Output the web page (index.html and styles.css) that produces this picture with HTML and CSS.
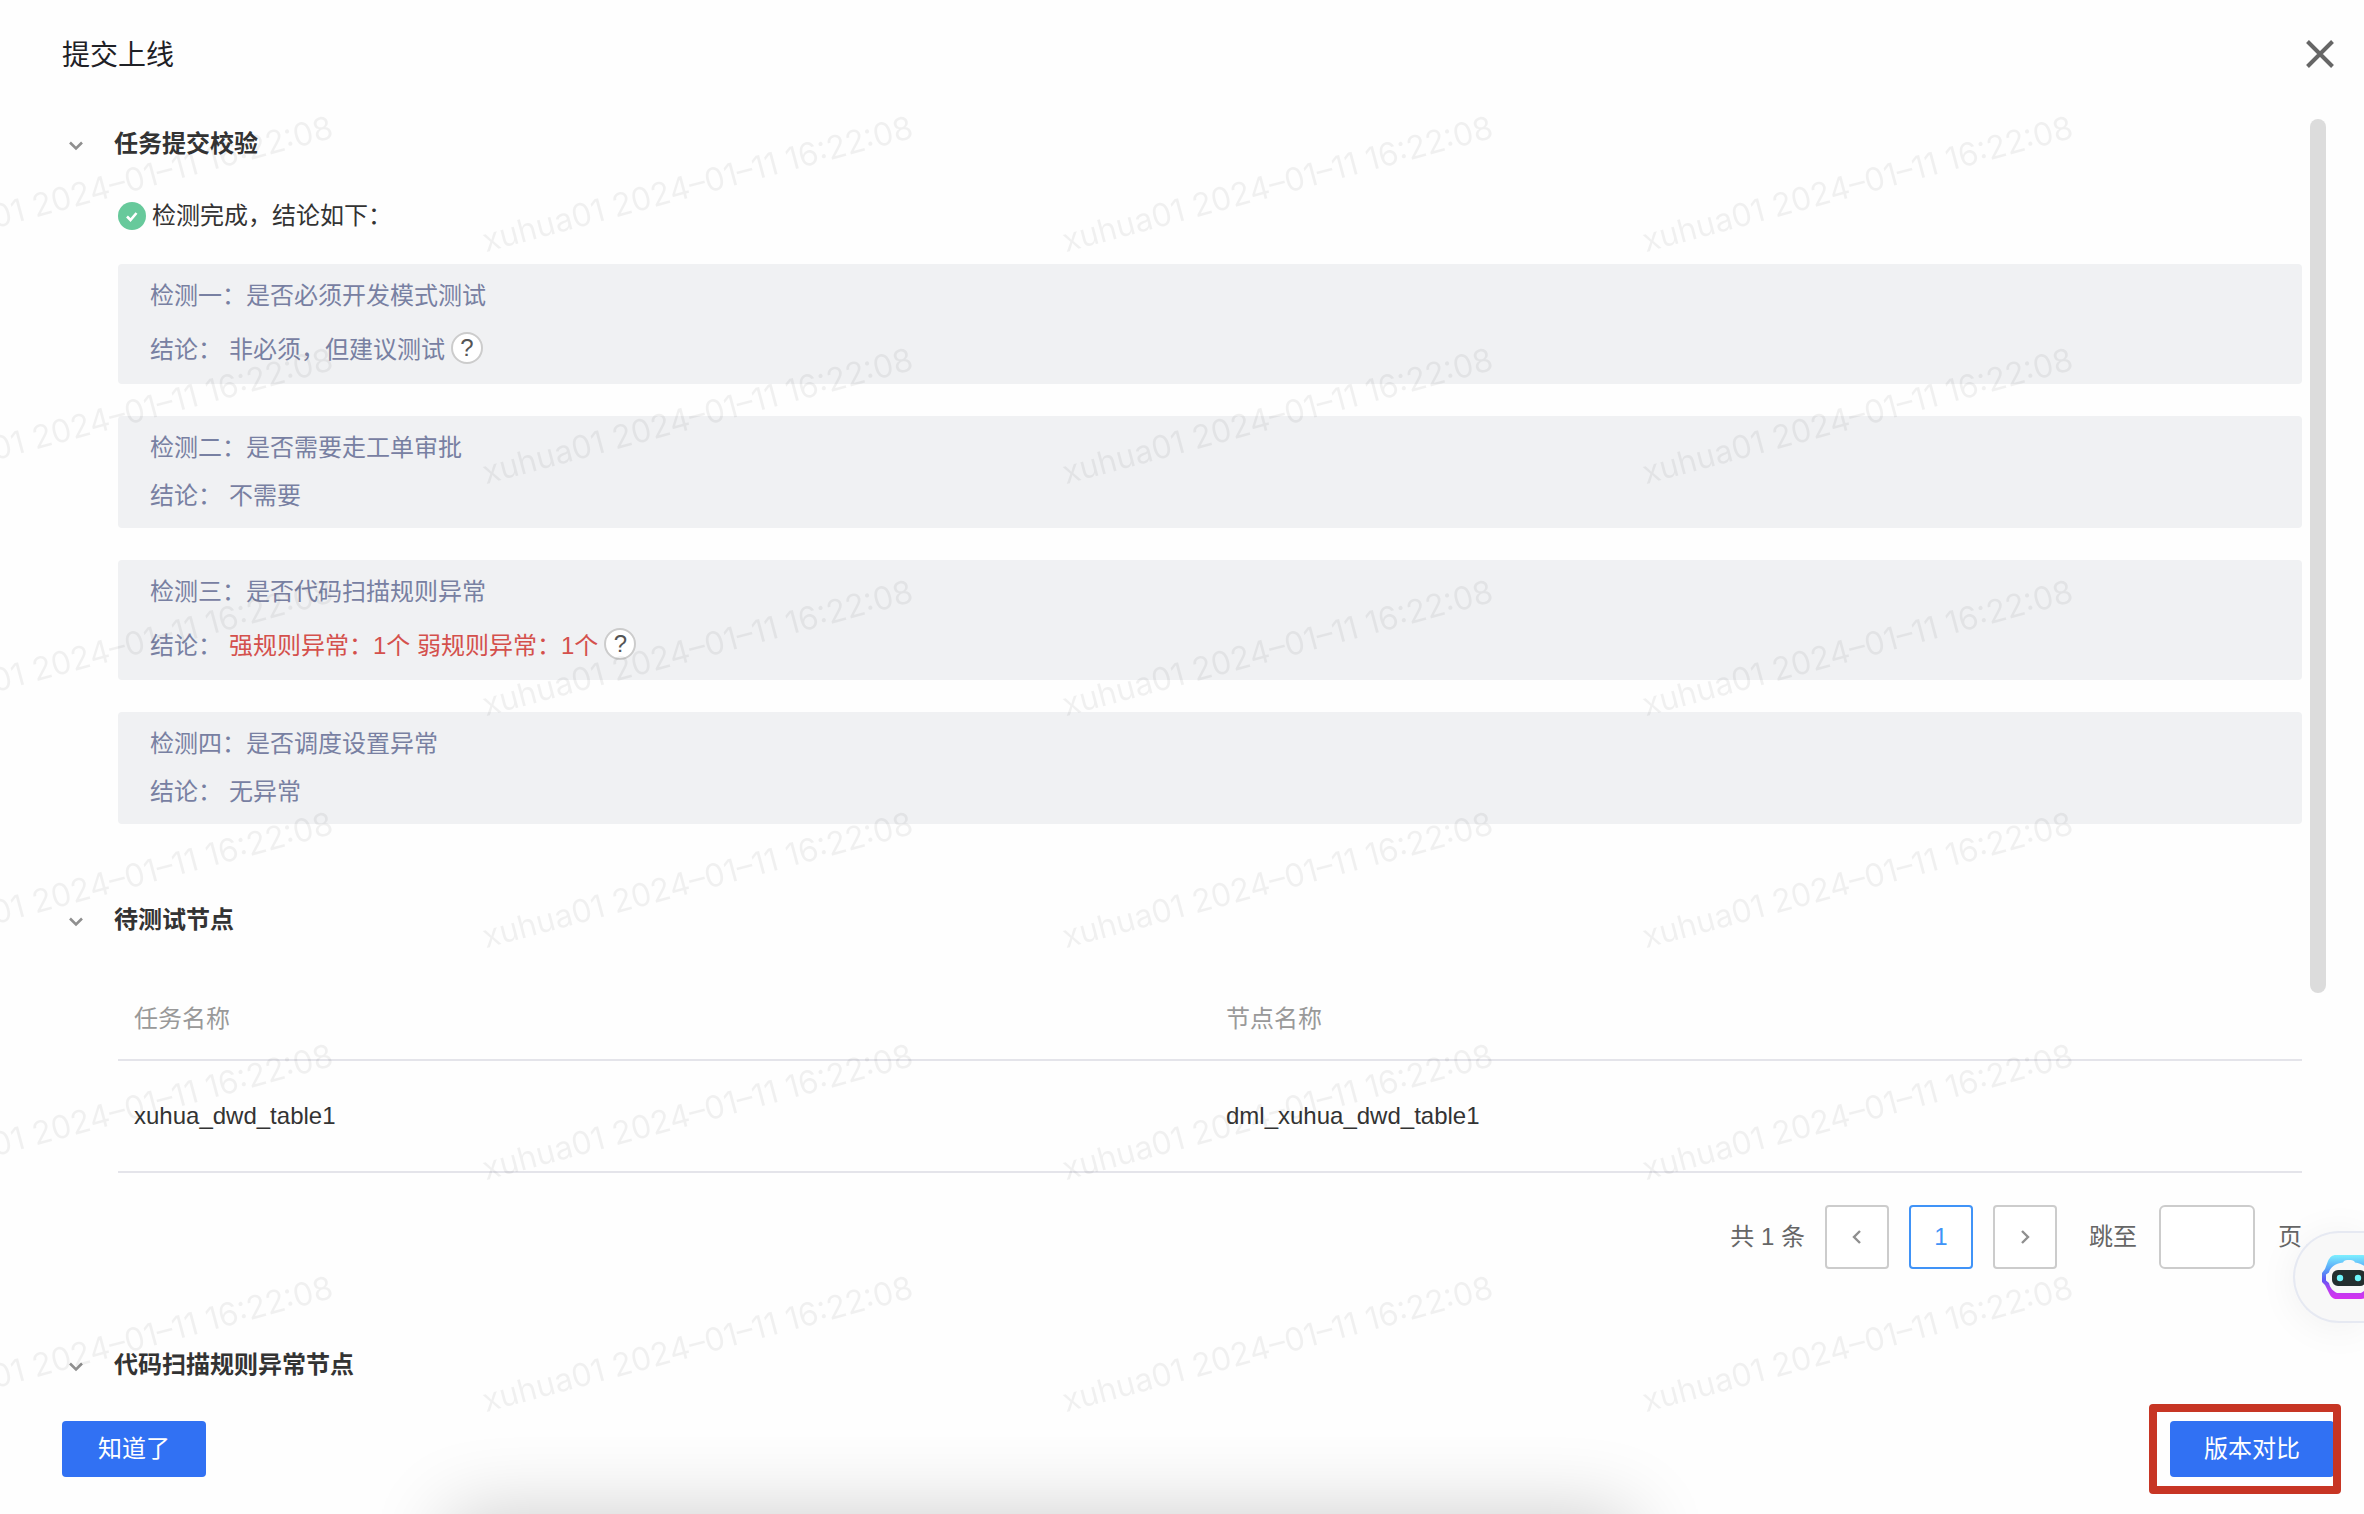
FILE: index.html
```html
<!DOCTYPE html>
<html lang="zh-CN">
<head>
<meta charset="utf-8">
<meta name="viewport" content="width=device-width, initial-scale=1">
<title>提交上线</title>
<link rel="stylesheet" href="styles.css">
</head>
<body>
<div class="dialog" role="dialog" aria-labelledby="dialog-title">
  <header class="dialog-header">
    <h1 class="dialog-title" id="dialog-title">提交上线</h1>
    <button class="close" type="button" aria-label="关闭">
      <svg width="28" height="28" viewBox="0 0 28 28" fill="none" stroke="#666" stroke-width="4"><path d="M1.5 1.5l25 25M26.5 1.5l-25 25"/></svg>
    </button>
  </header>

  <main class="dialog-body">
    <details class="section" open>
      <summary class="section-head">
        <svg class="chevron" width="14" height="10" viewBox="0 0 14 10" fill="none" stroke="#8f8f8f" stroke-width="2.6"><path d="M1 1.5l6 6 6-6"/></svg>
        <span>任务提交校验</span>
      </summary>
      <p class="status">
        <svg width="28" height="28" viewBox="0 0 28 28"><circle cx="14" cy="14" r="14" fill="#67c99b"/><path d="M9 14.5l3.500 3.500 6-7" fill="none" stroke="#fff" stroke-width="2.6"/></svg>
        <span>检测完成，结论如下：</span>
      </p>
      <div class="checks">
        <div class="check">
          <p class="line">检测一：是否必须开发模式测试</p>
          <p class="line line-tall">结论：<span class="result">非必须，但建议测试</span><button class="help" type="button" aria-label="帮助">?</button></p>
        </div>
        <div class="check">
          <p class="line">检测二：是否需要走工单审批</p>
          <p class="line">结论：<span class="result">不需要</span></p>
        </div>
        <div class="check">
          <p class="line">检测三：是否代码扫描规则异常</p>
          <p class="line line-tall">结论：<span class="result result-error">强规则异常：1个 弱规则异常：1个</span><button class="help" type="button" aria-label="帮助">?</button></p>
        </div>
        <div class="check">
          <p class="line">检测四：是否调度设置异常</p>
          <p class="line">结论：<span class="result">无异常</span></p>
        </div>
      </div>
    </details>

    <details class="section" open>
      <summary class="section-head">
        <svg class="chevron" width="14" height="10" viewBox="0 0 14 10" fill="none" stroke="#8f8f8f" stroke-width="2.6"><path d="M1 1.5l6 6 6-6"/></svg>
        <span>待测试节点</span>
      </summary>
      <div class="table-wrap">
        <table class="nodes">
          <thead><tr><th scope="col">任务名称</th><th scope="col">节点名称</th></tr></thead>
          <tbody><tr><td>xuhua_dwd_table1</td><td>dml_xuhua_dwd_table1</td></tr></tbody>
        </table>
        <nav class="pager" aria-label="分页">
          <span class="total">共 1 条</span>
          <button class="page" type="button" aria-label="上一页"><svg width="10" height="14" viewBox="0 0 10 14" fill="none" stroke="#8f8f8f" stroke-width="2.4"><path d="M8 1L2 7l6 6"/></svg></button>
          <button class="page page-current" type="button" aria-current="page">1</button>
          <button class="page" type="button" aria-label="下一页"><svg width="10" height="14" viewBox="0 0 10 14" fill="none" stroke="#8f8f8f" stroke-width="2.4"><path d="M2 1l6 6-6 6"/></svg></button>
          <label class="jump-label" for="jump">跳至</label>
          <input class="jump" id="jump" type="text">
          <span class="jump-unit">页</span>
        </nav>
      </div>
    </details>

    <details class="section">
      <summary class="section-head">
        <svg class="chevron" width="14" height="10" viewBox="0 0 14 10" fill="none" stroke="#8f8f8f" stroke-width="2.6"><path d="M1 1.5l6 6 6-6"/></svg>
        <span>代码扫描规则异常节点</span>
      </summary>
    </details>
    <div class="scroll-thumb"></div>
  </main>

  <footer class="dialog-footer">
    <button class="primary" type="button">知道了</button>
    <div class="compare">
      <button class="primary" type="button">版本对比</button>
    </div>
  </footer>
</div>

<button class="assistant" type="button" aria-label="智能助手">
  <svg width="54" height="44" viewBox="0 0 54 44">
    <defs><linearGradient id="shell" x1="0" y1="0" x2="0" y2="1"><stop offset="0" stop-color="#7df0ff"/><stop offset=".3" stop-color="#5aa8f8"/><stop offset=".55" stop-color="#5a5af5"/><stop offset=".8" stop-color="#b83df0"/><stop offset="1" stop-color="#d633f0"/></linearGradient></defs>
    <path fill="url(#shell)" d="M14 0h26c4 0 6 2 8 6l3 8 3 4v9l-3 3-4 8c-2 4-4 6-8 6H15c-4 0-6-2-8-6l-4-8-3-3v-9l3-4 3-8c2-4 4-6 8-6z"/>
    <path fill="#f8f8f8" d="M22 6c1-1.500 9-1.500 10 0l1 1.500c8 1.500 13 5 14 10l3 2v6l-3 2c-1 4-3 8-8 10.500H15c-4-2-7-5-8-10l-3-2.500v-6l3-2c1-5 6-9 14-10z"/>
    <rect x="10" y="15" width="34" height="16" rx="6" fill="#232f2f"/>
    <circle cx="18" cy="23" r="3.200" fill="#6ff5fb"/><circle cx="36" cy="23" r="3.200" fill="#6ff5fb"/>
  </svg>
</button>

<div class="dock-shadow"></div>

<div class="watermark" aria-hidden="true">
  <span>xuhua01 2024–01–11 16:22:08</span><span>xuhua01 2024–01–11 16:22:08</span><span>xuhua01 2024–01–11 16:22:08</span><span>xuhua01 2024–01–11 16:22:08</span>
  <span>xuhua01 2024–01–11 16:22:08</span><span>xuhua01 2024–01–11 16:22:08</span><span>xuhua01 2024–01–11 16:22:08</span><span>xuhua01 2024–01–11 16:22:08</span>
  <span>xuhua01 2024–01–11 16:22:08</span><span>xuhua01 2024–01–11 16:22:08</span><span>xuhua01 2024–01–11 16:22:08</span><span>xuhua01 2024–01–11 16:22:08</span>
  <span>xuhua01 2024–01–11 16:22:08</span><span>xuhua01 2024–01–11 16:22:08</span><span>xuhua01 2024–01–11 16:22:08</span><span>xuhua01 2024–01–11 16:22:08</span>
  <span>xuhua01 2024–01–11 16:22:08</span><span>xuhua01 2024–01–11 16:22:08</span><span>xuhua01 2024–01–11 16:22:08</span><span>xuhua01 2024–01–11 16:22:08</span>
  <span>xuhua01 2024–01–11 16:22:08</span><span>xuhua01 2024–01–11 16:22:08</span><span>xuhua01 2024–01–11 16:22:08</span><span>xuhua01 2024–01–11 16:22:08</span>
</div>
</body>
</html>
```
FILE: styles.css
```css
* { box-sizing: border-box; }

body {
  margin: 0;
  background: #fefefe;
  color: #333;
  font: 24px/36px "Liberation Sans", "Noto Sans CJK SC", sans-serif;
}

h1, p { margin: 0; }

button {
  padding: 0;
  border: 0;
  background: none;
  font: inherit;
  cursor: pointer;
}

svg { display: block; flex: none; }

.dialog {
  display: flex;
  flex-direction: column;
  min-height: 100vh;
}

/* Header */
.dialog-header {
  display: flex;
  align-items: flex-start;
  justify-content: space-between;
  padding: 34px 30px 0 62px;
}

.dialog-title {
  color: #1f2126;
  font-size: 28px;
  line-height: 44px;
  font-weight: 400;
}

.close { margin-top: 6px; }

/* Body */
.dialog-body {
  position: relative;
  flex: 1;
  margin-top: 40px;
  padding: 8px 62px 0 69px;
}

.section-head {
  display: flex;
  align-items: center;
  gap: 31px;
  height: 36px;
  list-style: none;
  font-weight: 700;
  cursor: pointer;
}

.section-head::-webkit-details-marker { display: none; }

.section + .section { margin-top: 78px; }

.chevron { margin-top: 4px; }

.status {
  display: flex;
  align-items: center;
  gap: 6px;
  margin: 36px 0 30px 49px;
}

.checks {
  display: grid;
  gap: 32px;
  margin-left: 49px;
}

.check {
  padding: 8px 32px;
  border-radius: 4px;
  background: #f0f1f3;
  color: #7880a2;
}

.line {
  display: flex;
  align-items: center;
  height: 48px;
}

.line-tall {
  height: 56px;
  padding-top: 3px;
}

.result { margin: 0 6px 0 7px; }

.result-error { color: #d4504c; }

.help {
  width: 32px;
  height: 32px;
  margin-bottom: 3px;
  border: 2px solid #ccc;
  border-radius: 50%;
  background: #fff;
  color: #555;
  line-height: 28px;
}

/* Nodes table */
.table-wrap { margin: 40px 0 0 49px; }

.nodes {
  width: 100%;
  border-spacing: 0;
  table-layout: fixed;
}

.nodes th,
.nodes td {
  padding: 0 16px;
  border-bottom: 2px solid #e4e4ea;
  text-align: left;
  font-weight: 400;
}

.nodes th {
  height: 83px;
  color: #999;
}

.nodes td { height: 112px; }

.pager {
  display: flex;
  align-items: center;
  justify-content: flex-end;
  gap: 20px;
  margin-top: 32px;
  color: #666;
}

.page {
  display: flex;
  align-items: center;
  justify-content: center;
  width: 64px;
  height: 64px;
  border: 2px solid #ccc;
  border-radius: 4px;
  background: #fff;
}

.page-current {
  border-color: #4093f7;
  color: #4093f7;
}

.jump-label { margin: 0 2px 0 12px; }

.jump {
  width: 96px;
  height: 64px;
  padding: 0 12px;
  border: 2px solid #ccc;
  border-radius: 6px;
  font: inherit;
}

.jump-unit { margin-left: 3px; }

.scroll-thumb {
  position: absolute;
  top: 1px;
  right: 38px;
  width: 16px;
  height: 68%;
  border-radius: 8px;
  background: #dcdcdc;
}

/* Footer */
.dialog-footer {
  display: flex;
  align-items: center;
  justify-content: space-between;
  padding: 0 23px 20px 62px;
}

.primary {
  height: 56px;
  padding: 0 36px;
  border-radius: 4px;
  background: #3171f3;
  color: #fff;
}

.compare {
  position: relative;
  padding: 17px 7px 17px 21px;
}

.compare .primary { padding: 0 34px; }

.compare::after {
  content: "";
  position: absolute;
  inset: 0;
  border: 8px solid #c73524;
  border-radius: 4px;
  pointer-events: none;
}

/* Floating assistant entry, tucked against the window edge */
.assistant {
  position: fixed;
  top: 1231px;
  right: 0;
  display: flex;
  align-items: center;
  width: 71px;
  height: 92px;
  padding-left: 27px;
  overflow: hidden;
  border: 2px solid #e6e9f2;
  border-right: 0;
  border-radius: 46px 0 0 46px;
  background: #f8f8f8;
  box-shadow: 0 4px 40px rgba(0, 0, 0, 0.06);
}

.dock-shadow {
  position: fixed;
  top: 100%;
  left: 19%;
  right: 31%;
  height: 100px;
  box-shadow: 0 0 80px rgba(0, 0, 0, 0.2);
}

/* User watermark over the whole window */
.watermark {
  position: fixed;
  inset: 0;
  display: grid;
  grid-template-columns: repeat(4, 580px);
  grid-auto-rows: 232px;
  padding-top: 29px;
  margin-left: -92px;
  overflow: hidden;
  color: rgba(0, 0, 0, 0.055);
  font: 32px/40px Inter, sans-serif;
  white-space: nowrap;
  pointer-events: none;
}

.watermark span {
  align-self: end;
  justify-self: start;
  transform: rotate(-15deg);
  transform-origin: 0 100%;
}
```
